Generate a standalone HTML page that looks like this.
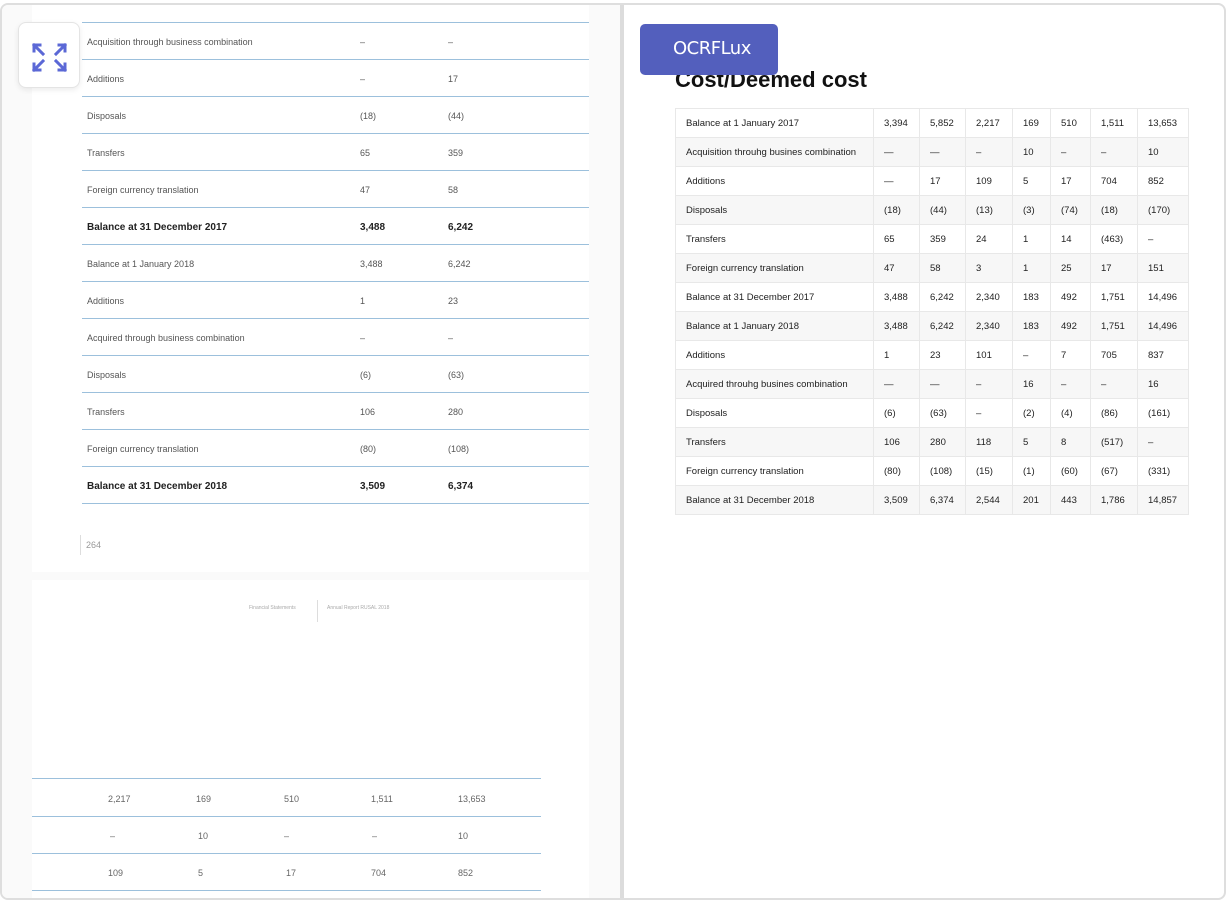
<!DOCTYPE html>
<html><head><meta charset="utf-8"><style>
*{margin:0;padding:0;box-sizing:border-box}
body{width:1226px;height:905px;background:#fff;position:relative;overflow:hidden;font-family:"Liberation Sans",sans-serif}
.frame{position:absolute;left:0;top:3px;width:1226px;height:897px;border:2px solid #dedede;border-radius:8px;overflow:hidden;background:#fff}
.left{position:absolute;left:0;top:0;width:618px;height:100%;background:#fafafa}
.div{position:absolute;left:618px;top:0;width:4px;height:100%;background:#dcdcdc}
.page{position:absolute;left:30px;background:#fff;width:557px}
.row{position:absolute;left:50px;width:507px;height:37px;border-bottom:1.5px solid #9cc0dc;font-size:9px;color:#555;font-family:"Liberation Sans",sans-serif}
.row span{position:absolute;top:14px}
.row.b{font-weight:bold;color:#222;font-size:10px}
.brow{position:absolute;left:0;width:509px;height:37px;border-bottom:1.5px solid #9cc0dc;font-size:9px;color:#666;font-family:"Liberation Sans",sans-serif}
.brow span{position:absolute;top:14px}
.exp{position:absolute;left:16px;top:17px;width:62px;height:66px;background:#fff;border:1px solid #e4e4e4;border-radius:8px;box-shadow:0 2px 6px rgba(0,0,0,.08)}
.badge{position:absolute;left:638px;top:19px;width:138px;height:51px;background:#535fbd;border-radius:5px;color:#fff;font-size:18px;padding:14px 0 0 33px;font-family:"DejaVu Sans",sans-serif;letter-spacing:-0.5px;z-index:2}
h1{position:absolute;left:673px;top:62px;font-size:22px;font-weight:bold;color:#111}
table{position:absolute;left:673px;top:103px;border-collapse:collapse;font-size:9.5px;color:#222}
td{border:1px solid #e8e8e8;height:29px;padding:0 0 0 10px;white-space:nowrap}
tr:nth-child(even) td{background:#f7f7f7}
</style></head><body>
<div class="frame">
<div class="left">
 <div class="page" style="top:-5px;height:572px">
  <div class="row" style="top:-14px"></div>
  <div class="row" style="top:23px"><span style="left:5px">Acquisition through business combination</span><span style="left:278px">–</span><span style="left:366px">–</span></div>
  <div class="row" style="top:60px"><span style="left:5px">Additions</span><span style="left:278px">–</span><span style="left:366px">17</span></div>
  <div class="row" style="top:97px"><span style="left:5px">Disposals</span><span style="left:278px">(18)</span><span style="left:366px">(44)</span></div>
  <div class="row" style="top:134px"><span style="left:5px">Transfers</span><span style="left:278px">65</span><span style="left:366px">359</span></div>
  <div class="row" style="top:171px"><span style="left:5px">Foreign currency translation</span><span style="left:278px">47</span><span style="left:366px">58</span></div>
  <div class="row b" style="top:208px"><span style="left:5px">Balance at 31 December 2017</span><span style="left:278px">3,488</span><span style="left:366px">6,242</span></div>
  <div class="row" style="top:245px"><span style="left:5px">Balance at 1 January 2018</span><span style="left:278px">3,488</span><span style="left:366px">6,242</span></div>
  <div class="row" style="top:282px"><span style="left:5px">Additions</span><span style="left:278px">1</span><span style="left:366px">23</span></div>
  <div class="row" style="top:319px"><span style="left:5px">Acquired through business combination</span><span style="left:278px">–</span><span style="left:366px">–</span></div>
  <div class="row" style="top:356px"><span style="left:5px">Disposals</span><span style="left:278px">(6)</span><span style="left:366px">(63)</span></div>
  <div class="row" style="top:393px"><span style="left:5px">Transfers</span><span style="left:278px">106</span><span style="left:366px">280</span></div>
  <div class="row" style="top:430px"><span style="left:5px">Foreign currency translation</span><span style="left:278px">(80)</span><span style="left:366px">(108)</span></div>
  <div class="row b" style="top:467px"><span style="left:5px">Balance at 31 December 2018</span><span style="left:278px">3,509</span><span style="left:366px">6,374</span></div>
  <div style="position:absolute;left:48px;top:535px;height:20px;border-left:1px solid #ddd;padding-left:5px;font-size:9px;color:#999;padding-top:5px">264</div>
 </div>
 <div class="page" style="top:575px;height:330px">
  <div style="position:absolute;left:217px;top:25px;font-size:5px;color:#aaa">Financial Statements</div>
  <div style="position:absolute;left:285px;top:20px;height:22px;border-left:1px solid #ddd"></div>
  <div style="position:absolute;left:295px;top:25px;font-size:5px;color:#aaa">Annual Report RUSAL 2018</div>
  <div style="position:absolute;left:0;top:198px;width:509px;border-top:1.5px solid #9cc0dc"></div>
  <div class="brow" style="top:200px"><span style="left:76px">2,217</span><span style="left:164px">169</span><span style="left:252px">510</span><span style="left:339px">1,511</span><span style="left:426px">13,653</span></div>
  <div class="brow" style="top:237px"><span style="left:78px">–</span><span style="left:166px">10</span><span style="left:252px">–</span><span style="left:340px">–</span><span style="left:426px">10</span></div>
  <div class="brow" style="top:274px"><span style="left:76px">109</span><span style="left:166px">5</span><span style="left:254px">17</span><span style="left:339px">704</span><span style="left:426px">852</span></div>
 </div>
</div>
<div class="div"></div>
<div class="exp"><svg width="62" height="66" viewBox="0 0 62 66"><g stroke="#5b68d6" stroke-width="3" fill="none" stroke-linecap="square">
<path d="M15 22 L15 28 M15 22 L21 22 M15 22 L24 31"/>
<path d="M46 22 L46 28 M46 22 L40 22 M46 22 L37 31"/>
<path d="M15 47 L15 41 M15 47 L21 47 M15 47 L24 38"/>
<path d="M46 47 L46 41 M46 47 L40 47 M46 47 L37 38"/></g></svg></div>
<div class="badge">OCRFLux</div>
<h1>Cost/Deemed cost</h1>
<table>
<colgroup><col style="width:198px"><col style="width:46px"><col style="width:46px"><col style="width:47px"><col style="width:38px"><col style="width:40px"><col style="width:47px"><col style="width:51px"></colgroup>
<tr><td>Balance at 1 January 2017</td><td>3,394</td><td>5,852</td><td>2,217</td><td>169</td><td>510</td><td>1,511</td><td>13,653</td></tr>
<tr><td>Acquisition throuhg busines combination</td><td>—</td><td>—</td><td>–</td><td>10</td><td>–</td><td>–</td><td>10</td></tr>
<tr><td>Additions</td><td>—</td><td>17</td><td>109</td><td>5</td><td>17</td><td>704</td><td>852</td></tr>
<tr><td>Disposals</td><td>(18)</td><td>(44)</td><td>(13)</td><td>(3)</td><td>(74)</td><td>(18)</td><td>(170)</td></tr>
<tr><td>Transfers</td><td>65</td><td>359</td><td>24</td><td>1</td><td>14</td><td>(463)</td><td>–</td></tr>
<tr><td>Foreign currency translation</td><td>47</td><td>58</td><td>3</td><td>1</td><td>25</td><td>17</td><td>151</td></tr>
<tr><td>Balance at 31 December 2017</td><td>3,488</td><td>6,242</td><td>2,340</td><td>183</td><td>492</td><td>1,751</td><td>14,496</td></tr>
<tr><td>Balance at 1 January 2018</td><td>3,488</td><td>6,242</td><td>2,340</td><td>183</td><td>492</td><td>1,751</td><td>14,496</td></tr>
<tr><td>Additions</td><td>1</td><td>23</td><td>101</td><td>–</td><td>7</td><td>705</td><td>837</td></tr>
<tr><td>Acquired throuhg busines combination</td><td>—</td><td>—</td><td>–</td><td>16</td><td>–</td><td>–</td><td>16</td></tr>
<tr><td>Disposals</td><td>(6)</td><td>(63)</td><td>–</td><td>(2)</td><td>(4)</td><td>(86)</td><td>(161)</td></tr>
<tr><td>Transfers</td><td>106</td><td>280</td><td>118</td><td>5</td><td>8</td><td>(517)</td><td>–</td></tr>
<tr><td>Foreign currency translation</td><td>(80)</td><td>(108)</td><td>(15)</td><td>(1)</td><td>(60)</td><td>(67)</td><td>(331)</td></tr>
<tr><td>Balance at 31 December 2018</td><td>3,509</td><td>6,374</td><td>2,544</td><td>201</td><td>443</td><td>1,786</td><td>14,857</td></tr>
</table>
</div>
</body></html>
